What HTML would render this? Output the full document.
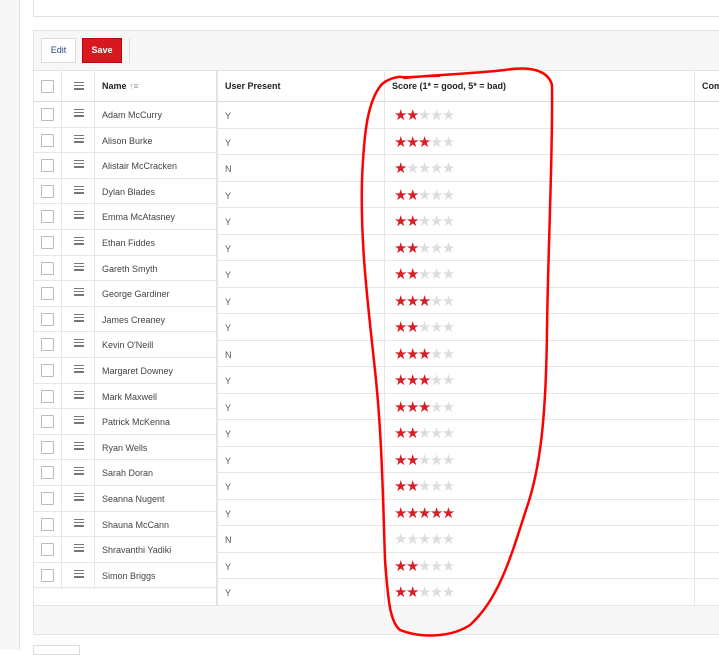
<!DOCTYPE html>
<html><head><style>
*{box-sizing:border-box;margin:0;padding:0}
body{width:719px;height:650px;overflow:hidden;background:#fff;font-family:"Liberation Sans",sans-serif;font-size:9px;color:#333;position:relative}
.abs{position:absolute}
.lrow{position:absolute;left:34px;width:183px;height:25.6px;border-bottom:1px solid #e6e6e6;background:#fff}
.cb{position:absolute;left:7px;top:6px;width:13px;height:13px;border:1px solid #bbb;background:#fff;border-radius:1px}
.hm{position:absolute;left:40px;top:7px;width:10px;height:8px;border-top:1px solid #777;border-bottom:1px solid #777}
.hm:after{content:"";position:absolute;left:0;right:0;top:2px;height:2px;border-top:1px solid #777;border-bottom:1px solid #777}
.nm{position:absolute;left:68px;top:8px;color:#444}
.rrow{position:absolute;left:217px;width:502px;height:26.5px;border-bottom:1px solid #e6e6e6;background:#fff}
.up{position:absolute;left:8px;top:9px;color:#555}
.st{position:absolute;left:177px;top:4px;font-size:15px;letter-spacing:-1.5px;color:#ddd}
.st b{color:#d52027;font-weight:normal}
</style></head><body>
<div class="abs" style="left:0;top:0;width:20px;height:650px;background:#f7f7f7;border-right:1px solid #e3e3e3"></div>
<div class="abs" style="left:33px;top:-2px;width:700px;height:19px;border:1px solid #e0e0e0;background:#fff"></div>
<div class="abs" style="left:33px;top:30px;width:700px;height:605px;background:#f7f7f7;border:1px solid #e3e3e3"></div>
<div class="abs" style="left:41px;top:38px;width:35px;height:25px;background:#fff;border:1px solid #ddd;color:#2a4a7a;text-align:center;line-height:23px">Edit</div>
<div class="abs" style="left:82px;top:38px;width:40px;height:25px;background:#d7191f;border:1px solid #b01;color:#fff;font-weight:bold;text-align:center;line-height:23px">Save</div>
<div class="abs" style="left:129px;top:38px;width:1px;height:25px;background:#e0e0e0"></div>
<div class="abs" style="left:34px;top:70px;width:685px;height:32px;background:#fff;border-top:1px solid #e3e3e3;border-bottom:1px solid #ddd"></div>
<div class="abs" style="left:61px;top:70px;width:1px;height:519px;background:#e6e6e6;z-index:2"></div>
<div class="abs" style="left:94px;top:70px;width:1px;height:519px;background:#e6e6e6;z-index:2"></div>
<div class="abs" style="left:216px;top:70px;width:2px;height:536px;background:#e3e3e3;z-index:2"></div>
<div class="abs" style="left:384px;top:70px;width:1px;height:536px;background:#e6e6e6;z-index:2"></div>
<div class="abs" style="left:694px;top:70px;width:1px;height:536px;background:#e6e6e6;z-index:2"></div>
<div class="cb" style="left:41px;top:80px"></div>
<div class="hm" style="left:74px;top:82px"></div>
<div class="abs" style="left:102px;top:81px;font-weight:bold;color:#222">Name <span style="color:#999;font-weight:normal">↑≡</span></div>
<div class="abs" style="left:225px;top:81px;font-weight:bold;color:#222">User Present</div>
<div class="abs" style="left:392px;top:81px;font-weight:bold;color:#222">Score (1* = good, 5* = bad)</div>
<div class="abs" style="left:702px;top:81px;font-weight:bold;color:#222">Com</div>
<div class="lrow" style="top:102px"><div class="cb"></div><div class="hm"></div><div class="nm">Adam McCurry</div></div>
<div class="lrow" style="top:127.6px"><div class="cb"></div><div class="hm"></div><div class="nm">Alison Burke</div></div>
<div class="lrow" style="top:153.2px"><div class="cb"></div><div class="hm"></div><div class="nm">Alistair McCracken</div></div>
<div class="lrow" style="top:178.8px"><div class="cb"></div><div class="hm"></div><div class="nm">Dylan Blades</div></div>
<div class="lrow" style="top:204.4px"><div class="cb"></div><div class="hm"></div><div class="nm">Emma McAtasney</div></div>
<div class="lrow" style="top:230px"><div class="cb"></div><div class="hm"></div><div class="nm">Ethan Fiddes</div></div>
<div class="lrow" style="top:255.6px"><div class="cb"></div><div class="hm"></div><div class="nm">Gareth Smyth</div></div>
<div class="lrow" style="top:281.2px"><div class="cb"></div><div class="hm"></div><div class="nm">George Gardiner</div></div>
<div class="lrow" style="top:306.8px"><div class="cb"></div><div class="hm"></div><div class="nm">James Creaney</div></div>
<div class="lrow" style="top:332.4px"><div class="cb"></div><div class="hm"></div><div class="nm">Kevin O'Neill</div></div>
<div class="lrow" style="top:358px"><div class="cb"></div><div class="hm"></div><div class="nm">Margaret Downey</div></div>
<div class="lrow" style="top:383.6px"><div class="cb"></div><div class="hm"></div><div class="nm">Mark Maxwell</div></div>
<div class="lrow" style="top:409.2px"><div class="cb"></div><div class="hm"></div><div class="nm">Patrick McKenna</div></div>
<div class="lrow" style="top:434.8px"><div class="cb"></div><div class="hm"></div><div class="nm">Ryan Wells</div></div>
<div class="lrow" style="top:460.4px"><div class="cb"></div><div class="hm"></div><div class="nm">Sarah Doran</div></div>
<div class="lrow" style="top:486px"><div class="cb"></div><div class="hm"></div><div class="nm">Seanna Nugent</div></div>
<div class="lrow" style="top:511.6px"><div class="cb"></div><div class="hm"></div><div class="nm">Shauna McCann</div></div>
<div class="lrow" style="top:537.2px"><div class="cb"></div><div class="hm"></div><div class="nm">Shravanthi Yadiki</div></div>
<div class="lrow" style="top:562.8px"><div class="cb"></div><div class="hm"></div><div class="nm">Simon Briggs</div></div>
<div class="abs" style="left:34px;top:589px;width:183px;height:17px;background:#fff;border-bottom:1px solid #e3e3e3"></div>
<div class="rrow" style="top:102px"><div class="up">Y</div><div class="st"><b>★★</b>★★★</div></div>
<div class="rrow" style="top:128.5px"><div class="up">Y</div><div class="st"><b>★★★</b>★★</div></div>
<div class="rrow" style="top:155px"><div class="up">N</div><div class="st"><b>★</b>★★★★</div></div>
<div class="rrow" style="top:181.5px"><div class="up">Y</div><div class="st"><b>★★</b>★★★</div></div>
<div class="rrow" style="top:208px"><div class="up">Y</div><div class="st"><b>★★</b>★★★</div></div>
<div class="rrow" style="top:234.5px"><div class="up">Y</div><div class="st"><b>★★</b>★★★</div></div>
<div class="rrow" style="top:261px"><div class="up">Y</div><div class="st"><b>★★</b>★★★</div></div>
<div class="rrow" style="top:287.5px"><div class="up">Y</div><div class="st"><b>★★★</b>★★</div></div>
<div class="rrow" style="top:314px"><div class="up">Y</div><div class="st"><b>★★</b>★★★</div></div>
<div class="rrow" style="top:340.5px"><div class="up">N</div><div class="st"><b>★★★</b>★★</div></div>
<div class="rrow" style="top:367px"><div class="up">Y</div><div class="st"><b>★★★</b>★★</div></div>
<div class="rrow" style="top:393.5px"><div class="up">Y</div><div class="st"><b>★★★</b>★★</div></div>
<div class="rrow" style="top:420px"><div class="up">Y</div><div class="st"><b>★★</b>★★★</div></div>
<div class="rrow" style="top:446.5px"><div class="up">Y</div><div class="st"><b>★★</b>★★★</div></div>
<div class="rrow" style="top:473px"><div class="up">Y</div><div class="st"><b>★★</b>★★★</div></div>
<div class="rrow" style="top:499.5px"><div class="up">Y</div><div class="st"><b>★★★★★</b></div></div>
<div class="rrow" style="top:526px"><div class="up">N</div><div class="st">★★★★★</div></div>
<div class="rrow" style="top:552.5px"><div class="up">Y</div><div class="st"><b>★★</b>★★★</div></div>
<div class="rrow" style="top:579px"><div class="up">Y</div><div class="st"><b>★★</b>★★★</div></div>
<div class="abs" style="left:33px;top:645px;width:47px;height:10px;border:1px solid #ddd;background:#fff"></div>
<svg class="abs" style="left:0;top:0;z-index:5" width="719" height="650">
<path d="M404 78 C430 75 470 74 505 70 C530 66 548 70 552 85 C553 150 548 250 547 330 C546 420 540 470 526 510 C510 560 498 600 470 625 C450 638 420 638 400 630 C390 622 388 600 385 560 C383 500 382 440 376 380 C370 320 360 250 362 180 C364 130 368 100 382 84 C392 76 404 76 404 78" fill="none" stroke="#f00" stroke-width="2.5" stroke-linecap="round"/>
<path d="M404 77 L440 76" stroke="#f00" stroke-width="2"/>
</svg>
</body></html>
